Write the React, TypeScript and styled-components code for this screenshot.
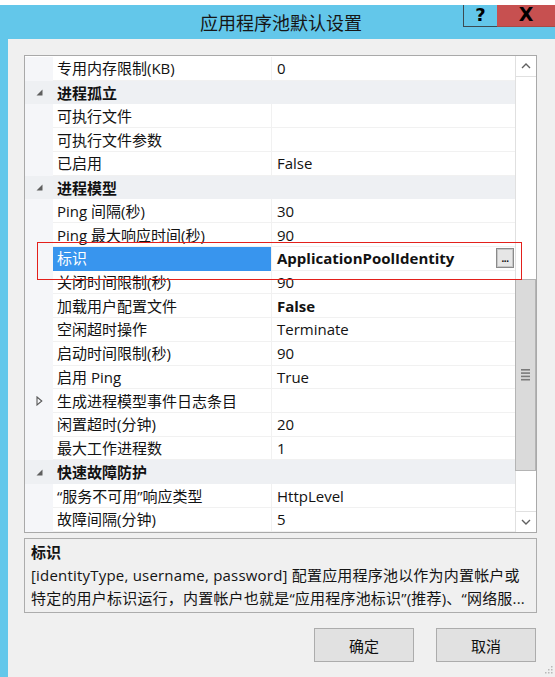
import React from "react";
import styled, { createGlobalStyle } from "styled-components";

const GlobalStyle = createGlobalStyle`
  html, body { margin: 0; padding: 0; background: #ffffff; }
  body { font-family: "Open Sans", "Noto Sans CJK SC", sans-serif; }
  * { box-sizing: border-box; }
`;

const Page = styled.div`
  position: relative;
  width: 555px;
  height: 677px;
  overflow: hidden;
  background: #ffffff;
  display: flex;
  flex-direction: column;
`;

const TopStrip = styled.div`
  height: 5px;
  flex: none;
  background: #ffffff;
`;

const TitleBar = styled.div`
  height: 34px;
  flex: none;
  display: flex;
  background: #63c7ea;
  padding-left: 99px;
`;

const Title = styled.div`
  flex: 1;
  display: flex;
  align-items: center;
  justify-content: center;
  font-family: "Noto Sans CJK SC", sans-serif;
  font-size: 18px;
  color: #161616;
  padding-bottom: 1px;
`;

const Controls = styled.div`
  display: flex;
  align-self: flex-start;
  height: 22px;
`;

const ControlButton = styled.div<{ $close?: boolean }>`
  width: ${(p) => (p.$close ? 58 : 34)}px;
  height: 22px;
  display: flex;
  align-items: center;
  justify-content: center;
  background: ${(p) => (p.$close ? "#c75050" : "#63c7ea")};
  border-left: ${(p) => (p.$close ? "none" : "1px solid #3c4b52")};
  border-bottom: 1px solid ${(p) => (p.$close ? "#a84a46" : "#3c4b52")};
  font-family: "DejaVu Sans", "Liberation Sans", sans-serif;
  font-weight: 700;
  font-size: ${(p) => (p.$close ? 19 : 18)}px;
  color: #000;
  padding-bottom: 3px;
`;

const Frame = styled.div`
  flex: 1;
  display: flex;
`;

const FrameEdge = styled.div`
  width: 8px;
  flex: none;
  background: #63c7ea;
`;

const Content = styled.div`
  flex: 1;
  background: #f0f0f0;
  padding: 16px 0 0 16px;
  display: flex;
  flex-direction: column;
`;

const Grid = styled.div`
  width: 513px;
  height: 478px;
  border: 1px solid #a9a9a9;
  background: #ffffff;
  display: flex;
`;

const RowsArea = styled.div`
  flex: 1;
  padding-top: 1px;
  display: flex;
  flex-direction: column;
  overflow: hidden;
`;

const Row = styled.div`
  height: 23.74px;
  flex: none;
  display: flex;
  font-size: 15px;
  line-height: 1.2;
  color: #121212;
`;

const Gutter = styled.div<{ $cat?: boolean }>`
  width: 28px;
  flex: none;
  display: flex;
  align-items: center;
  justify-content: center;
  padding-left: 1px;
  background: ${(p) => (p.$cat ? "#eef0f3" : "#f5f6f9")};
`;

const NameCell = styled.div<{ $selected?: boolean }>`
  width: 218px;
  flex: none;
  display: flex;
  align-items: center;
  padding-left: 4px;
  white-space: nowrap;
  overflow: hidden;
  background: ${(p) => (p.$selected ? "#3895ee" : "#ffffff")};
  color: ${(p) => (p.$selected ? "#ffffff" : "inherit")};
  border-bottom: 1px solid ${(p) => (p.$selected ? "#3895ee" : "#f1f1f1")};
`;

const ValueCell = styled.div<{ $bold?: boolean }>`
  flex: 1;
  display: flex;
  align-items: center;
  justify-content: space-between;
  padding-left: 5px;
  padding-right: 1px;
  white-space: nowrap;
  font-weight: ${(p) => (p.$bold ? 700 : 400)};
  border-left: 1px solid #f1f1f1;
  border-bottom: 1px solid #f1f1f1;
`;

const CategoryCell = styled.div`
  flex: 1;
  display: flex;
  align-items: center;
  padding-left: 4px;
  font-weight: 700;
  background: #eef0f3;
`;

const EllipsisButton = styled.div`
  width: 18px;
  height: 20px;
  display: flex;
  align-items: flex-end;
  justify-content: center;
  padding-bottom: 3px;
  background: #e6e6e6;
  border: 1px solid #8a8a8a;
  box-shadow: inset 0 0 0 1px #c6c6c6;
  font-family: "Liberation Sans", sans-serif;
  font-size: 10px;
  font-weight: 700;
  line-height: 1;
  letter-spacing: -0.5px;
  color: #111;
`;

const ScrollBar = styled.div`
  width: 21px;
  flex: none;
  display: flex;
  flex-direction: column;
  border-left: 1px solid #e0e0e0;
  background: #ffffff;
`;

const ScrollButton = styled.div<{ $down?: boolean }>`
  height: 21px;
  flex: none;
  display: flex;
  align-items: center;
  justify-content: center;
  border-top: ${(p) => (p.$down ? "1px solid #e0e0e0" : "none")};
  border-bottom: ${(p) => (p.$down ? "none" : "1px solid #e0e0e0")};
`;

const Track = styled.div`
  flex: 1;
  display: flex;
  flex-direction: column;
  padding-top: 202px;
`;

const Thumb = styled.div`
  height: 192px;
  display: flex;
  align-items: center;
  justify-content: center;
  background: #dadada;
  border: 1px solid #b4b4b4;
  margin-left: -1px;
`;

const Description = styled.div`
  width: 513px;
  height: 75px;
  margin-top: 5px;
  border: 1px solid #acacac;
  background: #f0f0f0;
  padding: 1.5px 6px 2px 6px;
  font-size: 15px;
  line-height: 23px;
  color: #141414;
`;

const DescTitle = styled.div`
  font-weight: 700;
`;

const DescLine = styled.div`
  white-space: nowrap;
  overflow: hidden;
  letter-spacing: 0.2px;
`;

const ButtonRow = styled.div`
  width: 513px;
  margin-top: 15px;
  display: flex;
  justify-content: flex-end;
  gap: 22px;
  padding-right: 1px;
`;

const DialogButton = styled.div`
  width: 100px;
  height: 34px;
  display: flex;
  align-items: center;
  justify-content: center;
  background: #e1e1e1;
  border: 1px solid #acacac;
  font-family: "Noto Sans CJK SC", sans-serif;
  font-size: 15px;
  color: #111;
`;

const Highlight = styled.div`
  position: absolute;
  left: 37px;
  top: 242px;
  width: 485px;
  height: 38px;
  border: 1.5px solid #e3201b;
  pointer-events: none;
`;

const ResizeGrip = styled.svg`
  position: absolute;
  right: 2px;
  bottom: 3px;
`;

const Expanded = () => (
  <svg width="7" height="7" viewBox="0 0 7 7">
    <polygon points="6.5,0.5 6.5,6.5 0.5,6.5" fill="#5f5f5f" />
  </svg>
);

const Collapsed = () => (
  <svg width="7" height="10" viewBox="0 0 7 10">
    <path d="M1 1 L5.8 5 L1 9 Z" fill="none" stroke="#5a5a5a" strokeWidth="1.1" />
  </svg>
);

const Chevron = ({ down }: { down?: boolean }) => (
  <svg width="10" height="6" viewBox="0 0 10 6">
    <path
      d={down ? "M1 1 L5 5 L9 1" : "M1 5 L5 1 L9 5"}
      fill="none"
      stroke="#606060"
      strokeWidth="1.4"
    />
  </svg>
);

const Grip = () => (
  <svg width="9" height="12" viewBox="0 0 9 12">
    {[0, 3.3, 6.6, 9.9].map((y) => (
      <rect key={y} x="0" y={y} width="9" height="1.6" fill="#7a7a7a" />
    ))}
  </svg>
);

type Item =
  | { kind: "cat"; label: string }
  | { kind: "prop"; label: string; value?: string; bold?: boolean; selected?: boolean; collapsed?: boolean };

const items: Item[] = [
  { kind: "prop", label: "专用内存限制(KB)", value: "0" },
  { kind: "cat", label: "进程孤立" },
  { kind: "prop", label: "可执行文件", value: "" },
  { kind: "prop", label: "可执行文件参数", value: "" },
  { kind: "prop", label: "已启用", value: "False" },
  { kind: "cat", label: "进程模型" },
  { kind: "prop", label: "Ping 间隔(秒)", value: "30" },
  { kind: "prop", label: "Ping 最大响应时间(秒)", value: "90" },
  { kind: "prop", label: "标识", value: "ApplicationPoolIdentity", bold: true, selected: true },
  { kind: "prop", label: "关闭时间限制(秒)", value: "90" },
  { kind: "prop", label: "加载用户配置文件", value: "False", bold: true },
  { kind: "prop", label: "空闲超时操作", value: "Terminate" },
  { kind: "prop", label: "启动时间限制(秒)", value: "90" },
  { kind: "prop", label: "启用 Ping", value: "True" },
  { kind: "prop", label: "生成进程模型事件日志条目", value: "", collapsed: true },
  { kind: "prop", label: "闲置超时(分钟)", value: "20" },
  { kind: "prop", label: "最大工作进程数", value: "1" },
  { kind: "cat", label: "快速故障防护" },
  { kind: "prop", label: "“服务不可用”响应类型", value: "HttpLevel" },
  { kind: "prop", label: "故障间隔(分钟)", value: "5" },
];

export default function App() {
  return (
    <Page>
      <GlobalStyle />
      <TopStrip />
      <TitleBar>
        <Title>应用程序池默认设置</Title>
        <Controls>
          <ControlButton>?</ControlButton>
          <ControlButton $close>X</ControlButton>
        </Controls>
      </TitleBar>
      <Frame>
        <FrameEdge />
        <Content>
          <Grid>
            <RowsArea>
              {items.map((it, i) =>
                it.kind === "cat" ? (
                  <Row key={i}>
                    <Gutter $cat>
                      <Expanded />
                    </Gutter>
                    <CategoryCell>{it.label}</CategoryCell>
                  </Row>
                ) : (
                  <Row key={i}>
                    <Gutter>{it.collapsed ? <Collapsed /> : null}</Gutter>
                    <NameCell $selected={it.selected}>{it.label}</NameCell>
                    <ValueCell $bold={it.bold}>
                      <span>{it.value}</span>
                      {it.selected ? <EllipsisButton>...</EllipsisButton> : null}
                    </ValueCell>
                  </Row>
                )
              )}
            </RowsArea>
            <ScrollBar>
              <ScrollButton>
                <Chevron />
              </ScrollButton>
              <Track>
                <Thumb>
                  <Grip />
                </Thumb>
              </Track>
              <ScrollButton $down>
                <Chevron down />
              </ScrollButton>
            </ScrollBar>
          </Grid>
          <Description>
            <DescTitle>标识</DescTitle>
            <DescLine>[identityType, username, password] 配置应用程序池以作为内置帐户或</DescLine>
            <DescLine>特定的用户标识运行，内置帐户也就是“应用程序池标识”(推荐)、“网络服...</DescLine>
          </Description>
          <ButtonRow>
            <DialogButton>确定</DialogButton>
            <DialogButton>取消</DialogButton>
          </ButtonRow>
        </Content>
      </Frame>
      <Highlight />
      <ResizeGrip width="8" height="8" viewBox="0 0 8 8">
        {[
          [6, 0],
          [6, 3],
          [3, 3],
          [6, 6],
          [3, 6],
          [0, 6],
        ].map(([x, y]) => (
          <rect key={`${x}-${y}`} x={x} y={y} width="1.5" height="1.5" fill="#b8b8b8" />
        ))}
      </ResizeGrip>
    </Page>
  );
}
